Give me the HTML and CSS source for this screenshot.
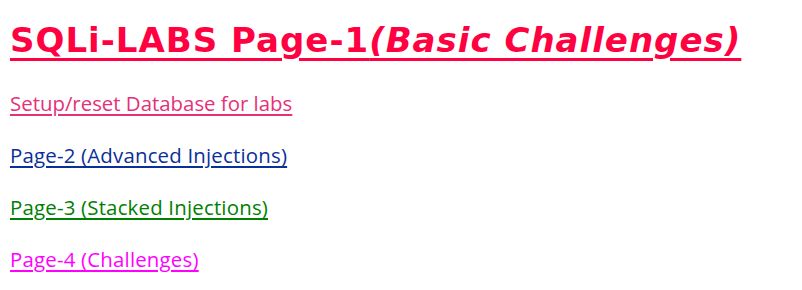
FILE: index.html
```
<!DOCTYPE html>
<html>
<head>
<meta charset="utf-8">
<title>SQLi-LABS</title>
<link rel="stylesheet" href="styles.css">
</head>
<body>
<h1 class="title"><a href="#" class="title-link">SQLi-LABS Page-1<i class="title-sub">(Basic Challenges)</i></a></h1>
<nav class="links">
<a href="#" class="link link-setup">Setup/reset Database for labs</a>
<a href="#" class="link link-p2">Page-2 (Advanced Injections)</a>
<a href="#" class="link link-p3">Page-3 (Stacked Injections)</a>
<a href="#" class="link link-p4">Page-4 (Challenges)</a>
</nav>
</body>
</html>
```
FILE: styles.css
```
html, body {
  margin: 0;
  padding: 0;
  background: #ffffff;
}
body {
  padding: 18px 10px 0 10px;
  font-family: "Open Sans", "Noto Sans", sans-serif;
}
.title {
  margin: 0;
  font-family: "DejaVu Sans", "Open Sans", sans-serif;
  font-size: 34px;
  font-weight: 700;
  letter-spacing: 1px;
  line-height: 44px;
}
.title-link {
  color: #ff0040;
  text-decoration: underline;
  text-underline-offset: 6px;
  text-decoration-thickness: 3px;
}
.title-sub {
  font-style: italic;
}
.links {
  display: flex;
  flex-direction: column;
  align-items: flex-start;
  gap: 25px;
  margin-top: 28px;
}
.link {
  font-size: 20.4px;
  letter-spacing: 0.2px;
  line-height: 27px;
  text-decoration: underline;
  text-underline-offset: 3px;
}
.link-setup { color: #e5307a; letter-spacing: 0; }
.link-p2 { color: #0a2f9a; }
.link-p3 { color: #008000; }
.link-p4 { color: #ff00ff; }
```
